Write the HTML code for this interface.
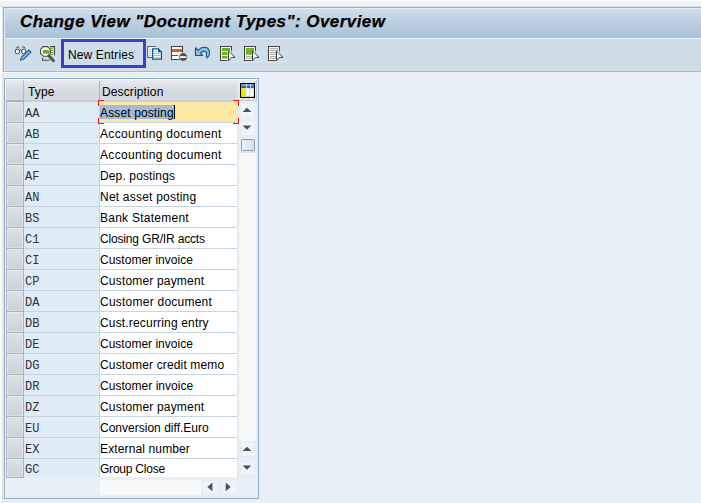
<!DOCTYPE html><html><head><meta charset="utf-8"><style>
*{margin:0;padding:0;box-sizing:border-box}
html,body{width:701px;height:503px;overflow:hidden;background:#e8eff7;position:relative;font-family:"Liberation Sans",sans-serif}
.a{position:absolute}
.cell{font:12px "Liberation Sans",sans-serif;color:#000;white-space:nowrap;letter-spacing:0.13px}
.mono{font:12px "Liberation Mono",monospace;color:#333;white-space:nowrap}
.sb{background:#edf1f6}
</style></head><body><div class="a" style="left:0px;top:0px;width:701px;height:1px;background:#fcfdfe;"></div>
<div class="a" style="left:0px;top:1px;width:701px;height:5px;background:#eff2f8;"></div>
<div class="a" style="left:0px;top:6px;width:701px;height:1px;background:#dfe3ea;"></div>
<div class="a" style="left:0px;top:7px;width:2px;height:496px;background:#fcfdfe;"></div>
<div class="a" style="left:2px;top:7px;width:1px;height:496px;background:#dfe3ea;"></div>
<div class="a" style="left:3px;top:72px;width:1px;height:431px;background:#e5eaf1;"></div>
<div class="a" style="left:3px;top:7px;width:698px;height:1px;background:#9aafc7;"></div>
<div class="a" style="left:3px;top:8px;width:698px;height:30px;background:linear-gradient(#e3ebf4 0px,#e3ebf4 1px,#cfdeeb 1px,#bccfe1 14px,#abc3da 28px,#a8c0d8 30px);"></div>
<div class="a" style="left:20px;top:12px;font:bold italic 17px 'Liberation Sans',sans-serif;letter-spacing:0.45px;color:#000;white-space:nowrap;-webkit-text-stroke:0.25px #000">Change View "Document Types": Overview</div>
<div class="a" style="left:3px;top:38px;width:698px;height:1px;background:#eef3f7;"></div>
<div class="a" style="left:3px;top:39px;width:698px;height:31px;background:#cfdde8;"></div>
<div class="a" style="left:3px;top:70px;width:698px;height:1px;background:#d4e0ea;"></div>
<div class="a" style="left:3px;top:71px;width:698px;height:1px;background:#a6b8c9;"></div>
<div class="a" style="left:3px;top:72px;width:698px;height:1px;background:#eff3f7;"></div>
<div class="a" style="left:3px;top:7px;width:1px;height:65px;background:#9eb2c8;"></div>
<div class="a" style="left:4px;top:8px;width:1px;height:63px;background:#dde6ef;"></div>
<div class="a" style="left:61px;top:39px;width:85px;height:29px;background:transparent;border:3px solid #3b40c6"></div>
<div class="a" style="left:68px;top:48px;font:12px 'Liberation Sans',sans-serif;letter-spacing:0.13px;color:#000;white-space:nowrap">New Entries</div>
<div class="a" style="left:4px;top:78px;width:255px;height:421px;background:#e9eff6;border:1px solid #8eadcc"></div>
<div class="a" style="left:5px;top:79px;width:253px;height:1px;background:#f3f6fa;"></div>
<div class="a" style="left:5px;top:79px;width:1px;height:419px;background:#f3f6fa;"></div>
<div class="a" style="left:6px;top:80px;width:17px;height:20px;background:linear-gradient(#e8ebef 0,#dadee4 40%,#d1d6dd 75%,#d9dde3 100%);"></div>
<div class="a" style="left:23px;top:80px;width:1px;height:21px;background:#b4bdc7;"></div>
<div class="a" style="left:24px;top:80px;width:75px;height:20px;background:linear-gradient(#e8ebef 0,#dadee4 40%,#d1d6dd 75%,#d9dde3 100%);"></div>
<div class="a" style="left:99px;top:81px;width:1px;height:19px;background:#a9b3bd;"></div>
<div class="a" style="left:100px;top:80px;width:137px;height:20px;background:linear-gradient(#e8ebef 0,#dadee4 40%,#d1d6dd 75%,#d9dde3 100%);"></div>
<div class="a" style="left:237px;top:80px;width:20px;height:21px;background:linear-gradient(#eceef1,#dfe3e7);border-right:1px solid #c3c9d0;border-bottom:1px solid #c3c9d0"></div>
<div class="a" style="left:6px;top:100px;width:231px;height:1px;background:#c3cbd4;"></div>
<div class="a" style="left:6px;top:100px;width:18px;height:1px;background:#a9b3bd;"></div>
<div class="a cell" style="left:28px;top:85px">Type</div>
<div class="a cell" style="left:102px;top:85px">Description</div>
<div class="a" style="left:24px;top:101px;width:213px;height:1px;background:#c6d3e0;"></div>
<div class="a" style="left:24px;top:102px;width:75px;height:20px;background:#dfebf5;"></div>
<div class="a" style="left:99px;top:102px;width:1px;height:20px;background:#c6d3e0;"></div>
<div class="a" style="left:100px;top:102px;width:137px;height:20px;background:#fce8a2;"></div>
<div class="a" style="left:6px;top:101px;width:18px;height:21px;background:#a9b3bd;"></div>
<div class="a" style="left:7px;top:102px;width:16px;height:20px;background:linear-gradient(#dde1e6,#ccd2d9);border:1px solid #e6e9ed;border-right-color:#dfe3e8;border-bottom-color:#dadee3"></div>
<div class="a mono" style="left:25px;top:107px">AA</div>
<div class="a" style="left:100px;top:105px;width:74px;height:14px;background:#a3bbd9;"></div>
<div class="a" style="left:174px;top:105px;width:1px;height:14px;background:#000;"></div>
<div class="a cell" style="left:100px;top:106px;letter-spacing:0.13px">Asset posting</div>
<div class="a" style="left:24px;top:122px;width:213px;height:1px;background:#c6d3e0;"></div>
<div class="a" style="left:24px;top:123px;width:75px;height:20px;background:#dfebf5;"></div>
<div class="a" style="left:99px;top:123px;width:1px;height:20px;background:#c6d3e0;"></div>
<div class="a" style="left:100px;top:123px;width:137px;height:20px;background:#fff;"></div>
<div class="a" style="left:6px;top:122px;width:18px;height:21px;background:#a9b3bd;"></div>
<div class="a" style="left:7px;top:123px;width:16px;height:20px;background:linear-gradient(#dde1e6,#ccd2d9);border:1px solid #e6e9ed;border-right-color:#dfe3e8;border-bottom-color:#dadee3"></div>
<div class="a mono" style="left:25px;top:128px">AB</div>
<div class="a cell" style="left:100px;top:127px;letter-spacing:0.33px">Accounting document</div>
<div class="a" style="left:24px;top:143px;width:213px;height:1px;background:#c6d3e0;"></div>
<div class="a" style="left:24px;top:144px;width:75px;height:20px;background:#dfebf5;"></div>
<div class="a" style="left:99px;top:144px;width:1px;height:20px;background:#c6d3e0;"></div>
<div class="a" style="left:100px;top:144px;width:137px;height:20px;background:#fff;"></div>
<div class="a" style="left:6px;top:143px;width:18px;height:21px;background:#a9b3bd;"></div>
<div class="a" style="left:7px;top:144px;width:16px;height:20px;background:linear-gradient(#dde1e6,#ccd2d9);border:1px solid #e6e9ed;border-right-color:#dfe3e8;border-bottom-color:#dadee3"></div>
<div class="a mono" style="left:25px;top:149px">AE</div>
<div class="a cell" style="left:100px;top:148px;letter-spacing:0.33px">Accounting document</div>
<div class="a" style="left:24px;top:164px;width:213px;height:1px;background:#c6d3e0;"></div>
<div class="a" style="left:24px;top:165px;width:75px;height:20px;background:#dfebf5;"></div>
<div class="a" style="left:99px;top:165px;width:1px;height:20px;background:#c6d3e0;"></div>
<div class="a" style="left:100px;top:165px;width:137px;height:20px;background:#fff;"></div>
<div class="a" style="left:6px;top:164px;width:18px;height:21px;background:#a9b3bd;"></div>
<div class="a" style="left:7px;top:165px;width:16px;height:20px;background:linear-gradient(#dde1e6,#ccd2d9);border:1px solid #e6e9ed;border-right-color:#dfe3e8;border-bottom-color:#dadee3"></div>
<div class="a mono" style="left:25px;top:170px">AF</div>
<div class="a cell" style="left:100px;top:169px;letter-spacing:0.13px">Dep. postings</div>
<div class="a" style="left:24px;top:185px;width:213px;height:1px;background:#c6d3e0;"></div>
<div class="a" style="left:24px;top:186px;width:75px;height:20px;background:#dfebf5;"></div>
<div class="a" style="left:99px;top:186px;width:1px;height:20px;background:#c6d3e0;"></div>
<div class="a" style="left:100px;top:186px;width:137px;height:20px;background:#fff;"></div>
<div class="a" style="left:6px;top:185px;width:18px;height:21px;background:#a9b3bd;"></div>
<div class="a" style="left:7px;top:186px;width:16px;height:20px;background:linear-gradient(#dde1e6,#ccd2d9);border:1px solid #e6e9ed;border-right-color:#dfe3e8;border-bottom-color:#dadee3"></div>
<div class="a mono" style="left:25px;top:191px">AN</div>
<div class="a cell" style="left:100px;top:190px;letter-spacing:0.212px">Net asset posting</div>
<div class="a" style="left:24px;top:206px;width:213px;height:1px;background:#c6d3e0;"></div>
<div class="a" style="left:24px;top:207px;width:75px;height:20px;background:#dfebf5;"></div>
<div class="a" style="left:99px;top:207px;width:1px;height:20px;background:#c6d3e0;"></div>
<div class="a" style="left:100px;top:207px;width:137px;height:20px;background:#fff;"></div>
<div class="a" style="left:6px;top:206px;width:18px;height:21px;background:#a9b3bd;"></div>
<div class="a" style="left:7px;top:207px;width:16px;height:20px;background:linear-gradient(#dde1e6,#ccd2d9);border:1px solid #e6e9ed;border-right-color:#dfe3e8;border-bottom-color:#dadee3"></div>
<div class="a mono" style="left:25px;top:212px">BS</div>
<div class="a cell" style="left:100px;top:211px;letter-spacing:0.251px">Bank Statement</div>
<div class="a" style="left:24px;top:227px;width:213px;height:1px;background:#c6d3e0;"></div>
<div class="a" style="left:24px;top:228px;width:75px;height:20px;background:#dfebf5;"></div>
<div class="a" style="left:99px;top:228px;width:1px;height:20px;background:#c6d3e0;"></div>
<div class="a" style="left:100px;top:228px;width:137px;height:20px;background:#fff;"></div>
<div class="a" style="left:6px;top:227px;width:18px;height:21px;background:#a9b3bd;"></div>
<div class="a" style="left:7px;top:228px;width:16px;height:20px;background:linear-gradient(#dde1e6,#ccd2d9);border:1px solid #e6e9ed;border-right-color:#dfe3e8;border-bottom-color:#dadee3"></div>
<div class="a mono" style="left:25px;top:233px">C1</div>
<div class="a cell" style="left:100px;top:232px;letter-spacing:-0.17px">Closing GR/IR accts</div>
<div class="a" style="left:24px;top:248px;width:213px;height:1px;background:#c6d3e0;"></div>
<div class="a" style="left:24px;top:249px;width:75px;height:20px;background:#dfebf5;"></div>
<div class="a" style="left:99px;top:249px;width:1px;height:20px;background:#c6d3e0;"></div>
<div class="a" style="left:100px;top:249px;width:137px;height:20px;background:#fff;"></div>
<div class="a" style="left:6px;top:248px;width:18px;height:21px;background:#a9b3bd;"></div>
<div class="a" style="left:7px;top:249px;width:16px;height:20px;background:linear-gradient(#dde1e6,#ccd2d9);border:1px solid #e6e9ed;border-right-color:#dfe3e8;border-bottom-color:#dadee3"></div>
<div class="a mono" style="left:25px;top:254px">CI</div>
<div class="a cell" style="left:100px;top:253px;letter-spacing:0.011px">Customer invoice</div>
<div class="a" style="left:24px;top:269px;width:213px;height:1px;background:#c6d3e0;"></div>
<div class="a" style="left:24px;top:270px;width:75px;height:20px;background:#dfebf5;"></div>
<div class="a" style="left:99px;top:270px;width:1px;height:20px;background:#c6d3e0;"></div>
<div class="a" style="left:100px;top:270px;width:137px;height:20px;background:#fff;"></div>
<div class="a" style="left:6px;top:269px;width:18px;height:21px;background:#a9b3bd;"></div>
<div class="a" style="left:7px;top:270px;width:16px;height:20px;background:linear-gradient(#dde1e6,#ccd2d9);border:1px solid #e6e9ed;border-right-color:#dfe3e8;border-bottom-color:#dadee3"></div>
<div class="a mono" style="left:25px;top:275px">CP</div>
<div class="a cell" style="left:100px;top:274px;letter-spacing:0.18px">Customer payment</div>
<div class="a" style="left:24px;top:290px;width:213px;height:1px;background:#c6d3e0;"></div>
<div class="a" style="left:24px;top:291px;width:75px;height:20px;background:#dfebf5;"></div>
<div class="a" style="left:99px;top:291px;width:1px;height:20px;background:#c6d3e0;"></div>
<div class="a" style="left:100px;top:291px;width:137px;height:20px;background:#fff;"></div>
<div class="a" style="left:6px;top:290px;width:18px;height:21px;background:#a9b3bd;"></div>
<div class="a" style="left:7px;top:291px;width:16px;height:20px;background:linear-gradient(#dde1e6,#ccd2d9);border:1px solid #e6e9ed;border-right-color:#dfe3e8;border-bottom-color:#dadee3"></div>
<div class="a mono" style="left:25px;top:296px">DA</div>
<div class="a cell" style="left:100px;top:295px;letter-spacing:0.236px">Customer document</div>
<div class="a" style="left:24px;top:311px;width:213px;height:1px;background:#c6d3e0;"></div>
<div class="a" style="left:24px;top:312px;width:75px;height:20px;background:#dfebf5;"></div>
<div class="a" style="left:99px;top:312px;width:1px;height:20px;background:#c6d3e0;"></div>
<div class="a" style="left:100px;top:312px;width:137px;height:20px;background:#fff;"></div>
<div class="a" style="left:6px;top:311px;width:18px;height:21px;background:#a9b3bd;"></div>
<div class="a" style="left:7px;top:312px;width:16px;height:20px;background:linear-gradient(#dde1e6,#ccd2d9);border:1px solid #e6e9ed;border-right-color:#dfe3e8;border-bottom-color:#dadee3"></div>
<div class="a mono" style="left:25px;top:317px">DB</div>
<div class="a cell" style="left:100px;top:316px;letter-spacing:0.17px">Cust.recurring entry</div>
<div class="a" style="left:24px;top:332px;width:213px;height:1px;background:#c6d3e0;"></div>
<div class="a" style="left:24px;top:333px;width:75px;height:20px;background:#dfebf5;"></div>
<div class="a" style="left:99px;top:333px;width:1px;height:20px;background:#c6d3e0;"></div>
<div class="a" style="left:100px;top:333px;width:137px;height:20px;background:#fff;"></div>
<div class="a" style="left:6px;top:332px;width:18px;height:21px;background:#a9b3bd;"></div>
<div class="a" style="left:7px;top:333px;width:16px;height:20px;background:linear-gradient(#dde1e6,#ccd2d9);border:1px solid #e6e9ed;border-right-color:#dfe3e8;border-bottom-color:#dadee3"></div>
<div class="a mono" style="left:25px;top:338px">DE</div>
<div class="a cell" style="left:100px;top:337px;letter-spacing:0.011px">Customer invoice</div>
<div class="a" style="left:24px;top:353px;width:213px;height:1px;background:#c6d3e0;"></div>
<div class="a" style="left:24px;top:354px;width:75px;height:20px;background:#dfebf5;"></div>
<div class="a" style="left:99px;top:354px;width:1px;height:20px;background:#c6d3e0;"></div>
<div class="a" style="left:100px;top:354px;width:137px;height:20px;background:#fff;"></div>
<div class="a" style="left:6px;top:353px;width:18px;height:21px;background:#a9b3bd;"></div>
<div class="a" style="left:7px;top:354px;width:16px;height:20px;background:linear-gradient(#dde1e6,#ccd2d9);border:1px solid #e6e9ed;border-right-color:#dfe3e8;border-bottom-color:#dadee3"></div>
<div class="a mono" style="left:25px;top:359px">DG</div>
<div class="a cell" style="left:100px;top:358px;letter-spacing:0.145px">Customer credit memo</div>
<div class="a" style="left:24px;top:374px;width:213px;height:1px;background:#c6d3e0;"></div>
<div class="a" style="left:24px;top:375px;width:75px;height:20px;background:#dfebf5;"></div>
<div class="a" style="left:99px;top:375px;width:1px;height:20px;background:#c6d3e0;"></div>
<div class="a" style="left:100px;top:375px;width:137px;height:20px;background:#fff;"></div>
<div class="a" style="left:6px;top:374px;width:18px;height:21px;background:#a9b3bd;"></div>
<div class="a" style="left:7px;top:375px;width:16px;height:20px;background:linear-gradient(#dde1e6,#ccd2d9);border:1px solid #e6e9ed;border-right-color:#dfe3e8;border-bottom-color:#dadee3"></div>
<div class="a mono" style="left:25px;top:380px">DR</div>
<div class="a cell" style="left:100px;top:379px;letter-spacing:0.036px">Customer invoice</div>
<div class="a" style="left:24px;top:395px;width:213px;height:1px;background:#c6d3e0;"></div>
<div class="a" style="left:24px;top:396px;width:75px;height:20px;background:#dfebf5;"></div>
<div class="a" style="left:99px;top:396px;width:1px;height:20px;background:#c6d3e0;"></div>
<div class="a" style="left:100px;top:396px;width:137px;height:20px;background:#fff;"></div>
<div class="a" style="left:6px;top:395px;width:18px;height:21px;background:#a9b3bd;"></div>
<div class="a" style="left:7px;top:396px;width:16px;height:20px;background:linear-gradient(#dde1e6,#ccd2d9);border:1px solid #e6e9ed;border-right-color:#dfe3e8;border-bottom-color:#dadee3"></div>
<div class="a mono" style="left:25px;top:401px">DZ</div>
<div class="a cell" style="left:100px;top:400px;letter-spacing:0.18px">Customer payment</div>
<div class="a" style="left:24px;top:416px;width:213px;height:1px;background:#c6d3e0;"></div>
<div class="a" style="left:24px;top:417px;width:75px;height:20px;background:#dfebf5;"></div>
<div class="a" style="left:99px;top:417px;width:1px;height:20px;background:#c6d3e0;"></div>
<div class="a" style="left:100px;top:417px;width:137px;height:20px;background:#fff;"></div>
<div class="a" style="left:6px;top:416px;width:18px;height:21px;background:#a9b3bd;"></div>
<div class="a" style="left:7px;top:417px;width:16px;height:20px;background:linear-gradient(#dde1e6,#ccd2d9);border:1px solid #e6e9ed;border-right-color:#dfe3e8;border-bottom-color:#dadee3"></div>
<div class="a mono" style="left:25px;top:422px">EU</div>
<div class="a cell" style="left:100px;top:421px;letter-spacing:0.01px">Conversion diff.Euro</div>
<div class="a" style="left:24px;top:437px;width:213px;height:1px;background:#c6d3e0;"></div>
<div class="a" style="left:24px;top:438px;width:75px;height:20px;background:#dfebf5;"></div>
<div class="a" style="left:99px;top:438px;width:1px;height:20px;background:#c6d3e0;"></div>
<div class="a" style="left:100px;top:438px;width:137px;height:20px;background:#fff;"></div>
<div class="a" style="left:6px;top:437px;width:18px;height:21px;background:#a9b3bd;"></div>
<div class="a" style="left:7px;top:438px;width:16px;height:20px;background:linear-gradient(#dde1e6,#ccd2d9);border:1px solid #e6e9ed;border-right-color:#dfe3e8;border-bottom-color:#dadee3"></div>
<div class="a mono" style="left:25px;top:443px">EX</div>
<div class="a cell" style="left:100px;top:442px;letter-spacing:0.13px">External number</div>
<div class="a" style="left:24px;top:458px;width:213px;height:1px;background:#c6d3e0;"></div>
<div class="a" style="left:24px;top:459px;width:75px;height:18px;background:#dfebf5;"></div>
<div class="a" style="left:99px;top:459px;width:1px;height:18px;background:#c6d3e0;"></div>
<div class="a" style="left:100px;top:459px;width:137px;height:18px;background:#fff;"></div>
<div class="a" style="left:6px;top:458px;width:18px;height:20px;background:#a9b3bd;"></div>
<div class="a" style="left:7px;top:459px;width:16px;height:18px;background:linear-gradient(#dde1e6,#ccd2d9);border:1px solid #e6e9ed;border-right-color:#dfe3e8;border-bottom-color:#dadee3"></div>
<div class="a mono" style="left:25px;top:463px">GC</div>
<div class="a cell" style="left:100px;top:462px;letter-spacing:-0.225px">Group Close</div>
<div class="a" style="left:237px;top:101px;width:2px;height:377px;background:#e3eaf3;"></div>
<div class="a" style="left:239px;top:101px;width:17px;height:377px;background:#e9eef5;"></div>
<div class="a" style="left:239px;top:152px;width:17px;height:289px;background:#f6f8fa;"></div>
<div class="a" style="left:256px;top:101px;width:2px;height:377px;background:#e6ecf4;"></div>
<div class="a" style="left:240px;top:103px;width:15px;height:15px;background:#f0f3f8;border:1px solid #e7ecf2"></div><svg class="a" style="left:240px;top:103px" width="15" height="15"><polygon points="2.6,9 11.4,9 7,4.7" fill="#3f5566"/></svg>
<div class="a" style="left:240px;top:121px;width:15px;height:15px;background:#f0f3f8;border:1px solid #e7ecf2"></div><svg class="a" style="left:240px;top:121px" width="15" height="15"><polygon points="2.6,4.5 11.4,4.5 7,8.8" fill="#3f5566"/></svg>
<div class="a" style="left:241px;top:151px;width:14px;height:2px;background:#dde3ea;"></div>
<div class="a" style="left:241px;top:139px;width:14px;height:12px;background:linear-gradient(90deg,#edf2f7,#d3dde7);border:1px solid #92a0af;border-radius:1px"></div>
<div class="a" style="left:240px;top:442px;width:15px;height:15px;background:#f0f3f8;border:1px solid #e7ecf2"></div><svg class="a" style="left:240px;top:442px" width="15" height="15"><polygon points="2.6,9 11.4,9 7,4.7" fill="#3f5566"/></svg>
<div class="a" style="left:240px;top:461px;width:15px;height:15px;background:#f0f3f8;border:1px solid #e7ecf2"></div><svg class="a" style="left:240px;top:461px" width="15" height="15"><polygon points="2.6,4.5 11.4,4.5 7,8.8" fill="#3f5566"/></svg>
<div class="a" style="left:6px;top:478px;width:252px;height:20px;background:#e9eff6;"></div>
<div class="a" style="left:100px;top:480px;width:101px;height:15px;background:#f7f9fb;"></div>
<div class="a" style="left:202px;top:480px;width:16px;height:15px;background:#f0f3f8;border:1px solid #e7ecf2"></div><svg class="a" style="left:202px;top:480px" width="16" height="15"><polygon points="10.4,2.5 10.4,11.2 5.4,6.9" fill="#3f5566"/></svg>
<div class="a" style="left:221px;top:480px;width:16px;height:15px;background:#f0f3f8;border:1px solid #e7ecf2"></div><svg class="a" style="left:221px;top:480px" width="16" height="15"><polygon points="4.7,2.5 4.7,11.2 9.7,6.9" fill="#3f5566"/></svg>
<div class="a" style="left:98px;top:100px;width:1px;height:6px;background:#e31b1b;"></div>
<div class="a" style="left:98px;top:100px;width:6px;height:1px;background:#e31b1b;"></div>
<div class="a" style="left:98px;top:118px;width:1px;height:6px;background:#e31b1b;"></div>
<div class="a" style="left:98px;top:123px;width:6px;height:1px;background:#e31b1b;"></div>
<div class="a" style="left:238px;top:100px;width:1px;height:6px;background:#e31b1b;"></div>
<div class="a" style="left:233px;top:100px;width:6px;height:1px;background:#e31b1b;"></div>
<div class="a" style="left:238px;top:118px;width:1px;height:6px;background:#e31b1b;"></div>
<div class="a" style="left:233px;top:123px;width:6px;height:1px;background:#e31b1b;"></div>
<svg class="a" style="left:240px;top:83px" width="15" height="15">
<rect x="0.6" y="0.6" width="13.8" height="13.8" fill="#fff" stroke="#000" stroke-width="1.3"/>
<rect x="1.3" y="1.3" width="12.4" height="3.9" fill="#1f62b2"/>
<rect x="1.3" y="1.3" width="12.4" height="1.6" fill="#6fb3ea"/>
<rect x="1.3" y="5.2" width="4.7" height="8.5" fill="#ffe000"/>
<rect x="9.2" y="5.2" width="0.9" height="8.5" fill="#cfd5dc"/>
<rect x="12.9" y="5.2" width="0.8" height="8.5" fill="#dfe3e8"/>
<rect x="6" y="1.3" width="0.9" height="12.4" fill="#e6ebf0"/>
<rect x="10.1" y="1.3" width="0.9" height="12.4" fill="#e6ebf0"/>
</svg>
<svg class="a" style="left:0;top:0" width="300" height="72">
<!-- glasses + pencil -->
<g fill="#fff" stroke="#3c3c3c" stroke-width="0.95">
<rect x="15.3" y="49.2" width="4.1" height="4.5" rx="1.7"/>
<rect x="21.7" y="49.2" width="4.1" height="4.5" rx="1.7"/>
</g>
<g fill="none" stroke="#3c3c3c" stroke-width="0.9">
<path d="M19.3 50.6 Q20.55 49.2 21.8 50.6"/>
<polyline points="16.2,48.4 17.7,46.4 19.2,48.1"/>
<polyline points="22.2,48.1 23.6,46.4 25.2,48.4"/>
</g>
<polygon points="20.4,60.2 23.75,59.09 31.03,52.19 28.97,50.01 21.69,56.91" fill="#8ab6de" stroke="#1b63a0" stroke-width="1.1" stroke-linejoin="round"/>
<!-- magnifier -->
<polyline points="50,46.6 54.5,46.6 54.5,55.5" fill="none" stroke="#4a4a4a" stroke-width="1.1"/>
<polyline points="42.6,57.8 42.6,60.2 49.7,60.2" fill="none" stroke="#4a4a4a" stroke-width="1.1"/>
<g fill="#6cb020"><rect x="50.5" y="48" width="2.3" height="1"/><rect x="50.5" y="50" width="2.3" height="1"/><rect x="50.5" y="52" width="2.3" height="1"/><rect x="50.5" y="54" width="2.3" height="1"/></g>
<polygon points="43.3,46.6 47.5,46.6 50.3,49.4 50.3,53.4 47.5,56.2 43.3,56.2 40.5,53.4 40.5,49.4" fill="#fff" stroke="#4a4a4a" stroke-width="1.1"/>
<rect x="42.8" y="50" width="6.8" height="3.7" fill="#6cb020"/>
<line x1="49.5" y1="56.5" x2="53.3" y2="60.5" stroke="#555" stroke-width="3.2" stroke-linecap="round"/>
<!-- copy -->
<path d="M156 46.6 H147.6 V57.4 H152" fill="#fff" stroke="#555" stroke-width="1"/>
<g fill="#b0b0b0"><rect x="149" y="49" width="2" height="0.9"/><rect x="149" y="51" width="2" height="0.9"/><rect x="149" y="53" width="2" height="0.9"/><rect x="149" y="55" width="2" height="0.9"/></g>
<path d="M152.7 48.8 H158.2 L161.4 52 V59.2 H152.7 Z" fill="#fff" stroke="#00598f" stroke-width="1.3"/>
<polygon points="158,48.2 162,52.2 158,52.2" fill="#00598f"/>
<g fill="#f5c026"><rect x="154" y="51" width="3" height="1"/><rect x="154" y="53" width="6" height="1"/><rect x="154" y="55" width="6" height="1"/><rect x="154" y="57" width="6" height="1"/></g>
<!-- delete row -->
<rect x="171.5" y="46.5" width="11" height="13" fill="#fff" stroke="#444" stroke-width="1.1"/>
<rect x="172" y="49" width="10" height="3" fill="#e05a10"/>
<rect x="172" y="55" width="6" height="1" fill="#555"/>
<circle cx="183.2" cy="57" r="4.3" fill="#505050" stroke="#e8edf2" stroke-width="0.7"/>
<rect x="180" y="56.2" width="6.3" height="1.8" fill="#fff"/>
<!-- undo -->
<path d="M195.5 47.8 L195.5 55.5 L202.6 55.5 L200.4 53.2 Q202.5 51 205 51.2 Q206.8 51.8 206.6 54.5 L206.2 56.5 L207.5 57.8 Q209.8 55 209.6 52 Q208.8 47.3 204.5 47.2 Q200.5 47.2 198.4 50.4 Z" fill="#94bbe0" stroke="#0b5c99" stroke-width="1.15" stroke-linejoin="round"/>
<!-- icon 6 -->
<path d="M227.5 60.5 H220.5 V46.5 H231.5 V51.5" fill="#fff" stroke="#444" stroke-width="1.05"/>
<rect x="222" y="48" width="8" height="3" fill="#6ab023"/>
<rect x="222" y="52" width="5.5" height="3" fill="#6ab023"/>
<rect x="222" y="56" width="5.5" height="2.6" fill="#6ab023"/>
<polygon points="228.5,51 235,57.4 231.4,57.4 228.5,60.8" fill="#fff" stroke="#444" stroke-width="1"/>
<!-- icon 7 -->
<path d="M251.5 60.5 H244.5 V46.5 H255.5 V51.5" fill="#fff" stroke="#444" stroke-width="1.05"/>
<rect x="246" y="48" width="8" height="6.8" fill="#72b21e"/>
<rect x="246.5" y="56.5" width="5" height="1.8" fill="none" stroke="#a8a8a8" stroke-width="0.9"/>
<polygon points="252.5,51 259,57.4 255.4,57.4 252.5,60.8" fill="#fff" stroke="#444" stroke-width="1"/>
<!-- icon 8 -->
<path d="M275.5 60.5 H268.5 V46.5 H279.5 V51.5" fill="#fff" stroke="#444" stroke-width="1.05"/>
<g fill="none" stroke="#a4a4a4" stroke-width="0.9"><rect x="270.6" y="48.6" width="6.8" height="1.9"/><rect x="270.6" y="52.6" width="5" height="1.9"/><rect x="270.6" y="56.6" width="5" height="1.9"/></g>
<polygon points="276.5,51 283,57.4 279.4,57.4 276.5,60.8" fill="#fff" stroke="#444" stroke-width="1"/>
</svg>
</body></html>
